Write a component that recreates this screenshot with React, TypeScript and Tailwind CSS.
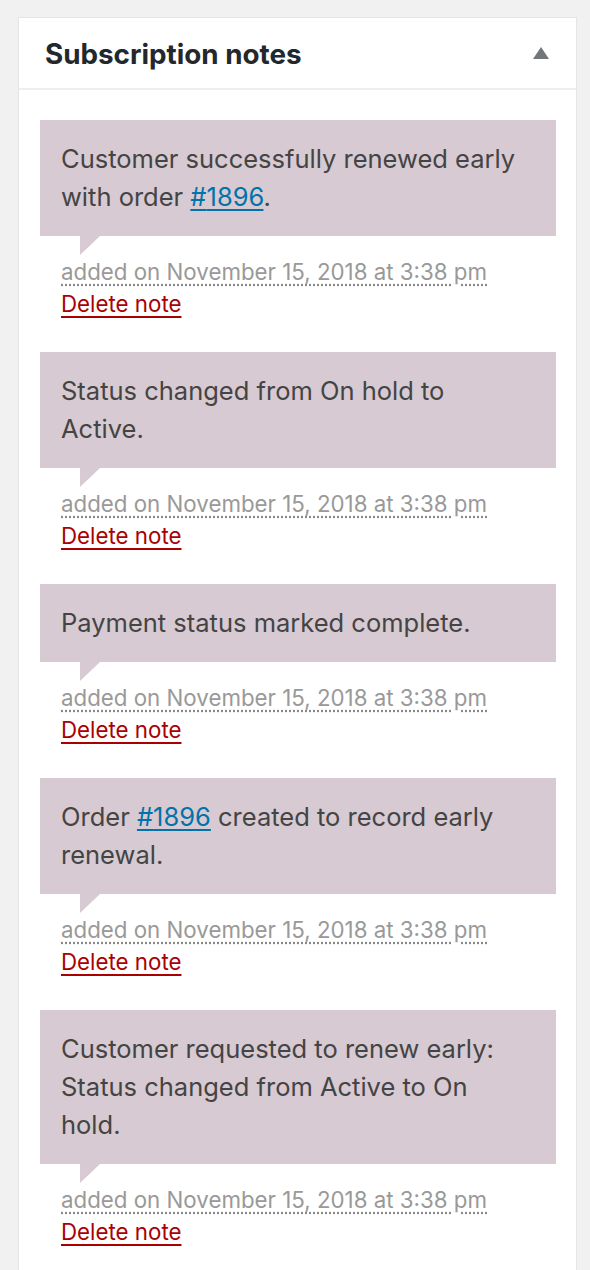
import type { ReactNode } from "react";

type Note = {
  id: number;
  content: ReactNode;
};

const FONT = { fontFamily: 'Inter, "Liberation Sans", Arial, sans-serif' };

function OrderLink({ num }: { num: string }) {
  return (
    <a href="#" className="text-[#0073aa] underline underline-offset-[3px]">
      #{num}
    </a>
  );
}

const notes: Note[] = [
  {
    id: 1,
    content: (
      <>
        Customer successfully renewed early with order <OrderLink num="1896" />.
      </>
    ),
  },
  { id: 2, content: "Status changed from On hold to Active." },
  { id: 3, content: "Payment status marked complete." },
  {
    id: 4,
    content: (
      <>
        Order <OrderLink num="1896" /> created to record early renewal.
      </>
    ),
  },
  {
    id: 5,
    content: "Customer requested to renew early: Status changed from Active to On hold.",
  },
];

function NoteItem({ note }: { note: Note }) {
  return (
    <li className="mb-[32px]">
      <div className="relative bg-[#d7cad2] py-[20px] pl-[21px] pr-[24px] text-[25.5px] leading-[38px] text-[#444]">
        <p>{note.content}</p>
        <span className="absolute left-[40px] top-full h-0 w-0 border-r-[20px] border-t-[19px] border-r-transparent border-t-[#d7cad2]" />
      </div>
      <p className="pl-[21px] pt-[20px] text-[22.3px] leading-[32px] text-[#999]">
        <abbr
          title="2018-11-15 15:38:00"
          className="underline decoration-dotted decoration-[#888] underline-offset-[4px]"
        >
          added on November 15, 2018 at 3:38 pm
        </abbr>
        <br />
        <a href="#" className="text-[#a00] underline underline-offset-[4px]">
          Delete note
        </a>
      </p>
    </li>
  );
}

export default function App() {
  return (
    <div className="min-h-screen bg-[#f1f1f1] pl-[18px] pr-[13px] pt-[17px]" style={FONT}>
      <section className="min-h-[1260px] border border-[#e5e5e5] bg-white shadow-[0_1px_1px_rgba(0,0,0,0.04)]">
        <header className="flex h-[72px] items-center justify-between border-b-2 border-[#eee] pl-[26px] pr-[27px] pt-[4px]">
          <h2 className="text-[27.8px] font-bold text-[#23282d]">Subscription notes</h2>
          <button type="button" aria-label="Toggle panel" className="-mt-[4px] h-0 w-0 border-x-[8px] border-b-[12px] border-x-transparent border-b-[#72777c]" />
        </header>
        <ul className="pl-[21px] pr-[20px] pt-[30px]">
          {notes.map((note) => (
            <NoteItem key={note.id} note={note} />
          ))}
        </ul>
      </section>
    </div>
  );
}
